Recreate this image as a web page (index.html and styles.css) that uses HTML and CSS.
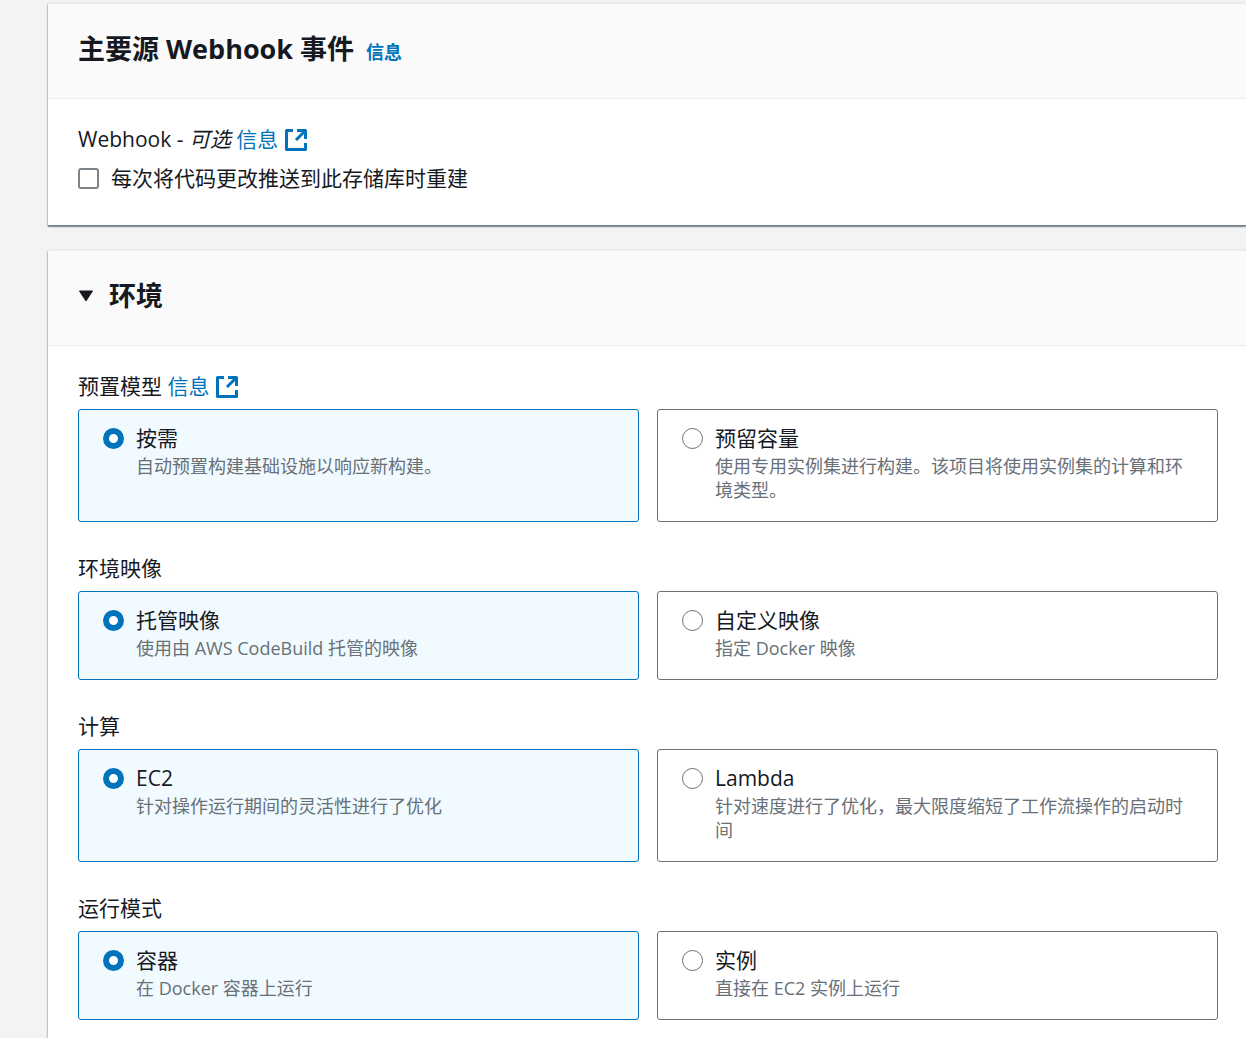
FILE: index.html
```html
<!DOCTYPE html>
<html lang="zh-CN">
<head>
<meta charset="utf-8">
<meta name="viewport" content="width=device-width, initial-scale=1">
<title>创建构建项目</title>
<link rel="stylesheet" href="styles.css">
</head>
<body>
<svg class="sprite" aria-hidden="true">
  <symbol id="external" viewBox="0 0 22 22">
    <path d="M8 1.500H1.500v19h19V14M12 1.500h8.500V10M19.500 2.500l-8.500 8.500" fill="none" stroke="currentColor" stroke-width="3" stroke-linejoin="round"/>
  </symbol>
</svg>
<main class="page">
  <section class="panel">
    <header class="panel-header">
      <h2 class="panel-title">主要源 Webhook 事件</h2>
      <a class="header-info" href="#">信息</a>
    </header>
    <div class="panel-body">
      <div class="field">
        <div class="label">Webhook - <i>可选</i> <a class="info" href="#">信息<svg class="external"><use href="#external"/></svg></a></div>
        <label class="check-row"><input class="checkbox" type="checkbox">每次将代码更改推送到此存储库时重建</label>
      </div>
    </div>
  </section>

  <section class="panel">
    <header class="panel-header">
      <button class="toggle" type="button" aria-expanded="true" aria-label="环境">
        <svg class="caret" viewBox="0 0 16 12"><path d="M1.500 1h13L8 11z" fill="currentColor" stroke="currentColor" stroke-linejoin="round"/></svg>
      </button>
      <h2 class="panel-title">环境</h2>
    </header>
    <div class="panel-body">
      <div class="field" role="radiogroup" aria-labelledby="l-model">
        <div class="label"><span id="l-model">预置模型</span> <a class="info" href="#">信息<svg class="external"><use href="#external"/></svg></a></div>
        <div class="tiles">
          <label class="tile"><input class="radio" type="radio" name="model" checked><span class="tile-text"><span class="tile-title">按需</span><span class="tile-desc">自动预置构建基础设施以响应新构建。</span></span></label>
          <label class="tile"><input class="radio" type="radio" name="model"><span class="tile-text"><span class="tile-title">预留容量</span><span class="tile-desc">使用专用实例集进行构建。该项目将使用实例集的计算和环境类型。</span></span></label>
        </div>
      </div>
      <div class="field" role="radiogroup" aria-labelledby="l-image">
        <div class="label" id="l-image">环境映像</div>
        <div class="tiles">
          <label class="tile"><input class="radio" type="radio" name="image" checked><span class="tile-text"><span class="tile-title">托管映像</span><span class="tile-desc">使用由 AWS CodeBuild 托管的映像</span></span></label>
          <label class="tile"><input class="radio" type="radio" name="image"><span class="tile-text"><span class="tile-title">自定义映像</span><span class="tile-desc">指定 Docker 映像</span></span></label>
        </div>
      </div>
      <div class="field" role="radiogroup" aria-labelledby="l-compute">
        <div class="label" id="l-compute">计算</div>
        <div class="tiles">
          <label class="tile"><input class="radio" type="radio" name="compute" checked><span class="tile-text"><span class="tile-title">EC2</span><span class="tile-desc">针对操作运行期间的灵活性进行了优化</span></span></label>
          <label class="tile"><input class="radio" type="radio" name="compute"><span class="tile-text"><span class="tile-title">Lambda</span><span class="tile-desc">针对速度进行了优化，最大限度缩短了工作流操作的启动时间</span></span></label>
        </div>
      </div>
      <div class="field" role="radiogroup" aria-labelledby="l-mode">
        <div class="label" id="l-mode">运行模式</div>
        <div class="tiles">
          <label class="tile"><input class="radio" type="radio" name="mode" checked><span class="tile-text"><span class="tile-title">容器</span><span class="tile-desc">在 Docker 容器上运行</span></span></label>
          <label class="tile"><input class="radio" type="radio" name="mode"><span class="tile-text"><span class="tile-title">实例</span><span class="tile-desc">直接在 EC2 实例上运行</span></span></label>
        </div>
      </div>
    </div>
  </section>
</main>
</body>
</html>
```
FILE: styles.css
```css
* { box-sizing: border-box; }

html { scrollbar-width: none; }

body {
  margin: 0;
  background: #f2f3f3;
  color: #16191f;
  font-family: "Open Sans", "Noto Sans CJK SC", sans-serif;
  font-size: 21px;
  line-height: 33px;
}

a { color: #0073bb; text-decoration: none; }

.sprite { display: none; }

.page {
  display: flex;
  flex-direction: column;
  gap: 25px;
  padding: 3px 0 0 48px;
}

.panel {
  background: #fff;
  box-shadow: 0 1px 2px rgba(0, 28, 36, 0.5), 0 2px 1px rgba(0, 28, 36, 0.3);
}

.panel-header {
  display: flex;
  align-items: baseline;
  padding: 27px 28px 31px 30px;
  background: #fafafa;
  border-top: 1px solid #eaeded;
  border-bottom: 1px solid #eaeded;
}

.panel-title {
  margin: 0;
  font-size: 27px;
  font-weight: 700;
  line-height: 36px;
}

.header-info {
  margin-left: 12px;
  font-size: 18px;
  font-weight: 700;
  line-height: 24px;
}

.toggle {
  margin: 0 15px 0 0;
  padding: 0;
  border: 0;
  background: none;
  color: inherit;
  align-self: center;
  display: flex;
}

.caret { width: 16px; height: 12px; }

.panel-body {
  display: flex;
  flex-direction: column;
  gap: 30px;
  padding: 24px 28px 30px 30px;
}

.field {
  display: flex;
  flex-direction: column;
  gap: 6px;
}

.label { height: 33px; }

.external {
  width: 22px;
  height: 22px;
  margin-left: 7px;
  vertical-align: -4px;
}

.check-row {
  display: flex;
  align-items: center;
  gap: 12px;
}

.checkbox, .radio {
  appearance: none;
  flex: none;
  width: 21px;
  height: 21px;
  margin: 0;
  border: 1px solid #687078;
  background: #fff;
}

.checkbox { border-width: 2px; border-color: #7c8389; border-radius: 3px; }

.checkbox:checked { background: #0073bb; }

.radio { margin-top: 3px; border-radius: 50%; }

.radio:checked { border: 6px solid #0073bb; }

.tiles {
  display: grid;
  grid-template-columns: 1fr 1fr;
  gap: 18px;
}

.tile {
  display: flex;
  gap: 12px;
  padding: 15px 24px 19px;
  border: 1px solid #687078;
  border-radius: 3px;
}

.tile:has(:checked) {
  border-color: #0073bb;
  background: #f1faff;
}

.tile-text {
  display: flex;
  flex-direction: column;
  gap: 2px;
}

.tile-title { line-height: 27px; }

.tile-desc {
  color: #687078;
  font-size: 18px;
  line-height: 24px;
}
```
